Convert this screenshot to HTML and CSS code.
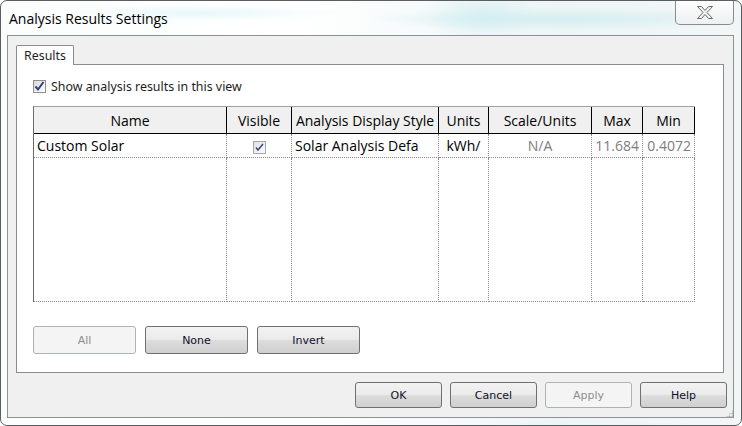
FILE: index.html
```html
<!DOCTYPE html>
<html lang="en">
  <head>
    <meta charset="UTF-8" />
    <title>Analysis Results Settings</title>
    <link rel="stylesheet" href="styles.css">
  </head>
  <body>
    <div class="window">
      <div class="titlebar">
        <span class="title">Analysis Results Settings</span>
        <button class="close-btn" title="Close">
          <svg width="18" height="13" viewBox="0 0 18 13">
            <path d="M1.5 0.5h4l3.5 4 3.5-4h4l-5.5 6 5.5 6h-4l-3.5-4-3.5 4h-4l5.5-6z" fill="#f2f2f2" stroke="#6b6b6b" stroke-width="1" stroke-linejoin="round"/>
          </svg>
        </button>
      </div>

      <div class="client">
        <div class="tabs">
          <div class="tab active">Results</div>
        </div>

        <div class="panel">
          <label class="check-row">
            <span class="checkbox">
              <svg width="11" height="11" viewBox="0 0 11 11">
                <path d="M1.5 5.5l2.5 3 5.5-7.5" fill="none" stroke="#2c3f86" stroke-width="2"/>
              </svg>
            </span>
            Show analysis results in this view
          </label>

          <div class="grid">
            <table>
              <colgroup>
                <col style="width: 193px">
                <col style="width: 65px">
                <col style="width: 147px">
                <col style="width: 50px">
                <col style="width: 103px">
                <col style="width: 51px">
                <col style="width: 52px">
              </colgroup>
              <thead>
                <tr>
                  <th>Name</th>
                  <th>Visible</th>
                  <th>Analysis Display Style</th>
                  <th>Units</th>
                  <th>Scale/Units</th>
                  <th>Max</th>
                  <th>Min</th>
                </tr>
              </thead>
              <tbody>
                <tr class="data-row">
                  <td>Custom Solar</td>
                  <td class="center">
                    <span class="checkbox small">
                      <svg width="9" height="9" viewBox="0 0 9 9">
                        <path d="M1 4.5l2 2.5 5-6" fill="none" stroke="#3a4c8a" stroke-width="1.6"/>
                      </svg>
                    </span>
                  </td>
                  <td>Solar Analysis Defa</td>
                  <td class="center">kWh/</td>
                  <td class="center muted">N/A</td>
                  <td class="num muted">11.684</td>
                  <td class="num muted">0.4072</td>
                </tr>
                <tr class="filler">
                  <td></td><td></td><td></td><td></td><td></td><td></td><td></td>
                </tr>
              </tbody>
            </table>
          </div>

          <div class="sel-buttons">
            <button class="btn wide" disabled>All</button>
            <button class="btn wide">None</button>
            <button class="btn wide">Invert</button>
          </div>
        </div>

        <div class="dialog-buttons">
          <button class="btn">OK</button>
          <button class="btn">Cancel</button>
          <button class="btn" disabled>Apply</button>
          <button class="btn">Help</button>
        </div>
        <span class="grip"></span>
      </div>
    </div>
  </body>
</html>
```

FILE: styles.css
```css
body {
  margin: 0;
  background-color: #ffffff;
  font-family: "Noto Sans", "Open Sans", sans-serif;
  font-size: 12.4px;
  color: #1e1e1e;
}

.window {
  width: 742px;
  height: 426px;
  box-sizing: border-box;
  border: 1px solid #5c5d60;
  border-radius: 7px;
  display: flex;
  flex-direction: column;
  overflow: hidden;
  background:
    radial-gradient(ellipse 140px 8px at 200px 12px, rgba(215, 242, 247, 0.6), transparent),
    radial-gradient(ellipse 200px 12px at 560px 18px, rgba(205, 236, 240, 0.8), transparent),
    radial-gradient(ellipse 60px 30px at 480px 14px, rgba(195, 234, 241, 0.5), transparent),
    linear-gradient(90deg, #fbfdfd 0%, #ffffff 40%, #eef5f5 75%, #f2f6f7 100%);
}

.titlebar {
  height: 34px;
  flex-shrink: 0;
  display: flex;
  align-items: flex-start;
  padding-left: 8px;
}

.title {
  font-family: "Open Sans", "Noto Sans", sans-serif;
  font-size: 14px;
  line-height: 35px;
  color: #000000;
}

.close-btn {
  margin-left: auto;
  margin-right: 7px;
  width: 59px;
  height: 24px;
  padding: 0;
  border: 1px solid #8b8b8b;
  border-top: none;
  border-radius: 0 0 5px 5px;
  background: linear-gradient(#fdfdfd, #eef0f1);
  display: flex;
  align-items: center;
  justify-content: center;
}

.client {
  flex: 1;
  margin: 0 7px 7px 6px;
  border: 1px solid #8f9091;
  background-color: #f0f0f0;
  display: flex;
  flex-direction: column;
  padding: 9px 6px 0 8px;
  position: relative;
}

.tabs {
  display: flex;
}

.tab {
  height: 19px;
  padding: 0 7px;
  border: 1px solid #898c95;
  border-bottom: none;
  border-radius: 2px 2px 0 0;
  background-color: #ffffff;
  line-height: 19px;
  margin-bottom: -1px;
  position: relative;
  z-index: 1;
}

.panel {
  box-sizing: border-box;
  height: 309px;
  border: 1px solid #898c95;
  background-color: #ffffff;
  padding: 15px 0 0 16px;
  margin-right: 3px;
}

.check-row {
  display: flex;
  align-items: center;
  gap: 5px;
  height: 13px;
  line-height: 13px;
}

.checkbox {
  width: 11px;
  height: 11px;
  border: 1px solid #8e8f8f;
  background: linear-gradient(135deg, #d9d9d9, #ffffff);
  display: inline-flex;
  align-items: center;
  justify-content: center;
}

.checkbox.small {
  border-color: #a7a7a7;
  background: linear-gradient(135deg, #e2e2e2, #fafafa);
  vertical-align: middle;
}

.grid {
  margin-top: 13px;
  width: 661px;
  height: 195px;
  border-left: 1px solid #6a6a6a;
  border-top: 1px solid #a0a0a0;
  background-color: #ffffff;
}

table {
  width: 661px;
  height: 195px;
  table-layout: fixed;
  border-collapse: separate;
  border-spacing: 0;
  font-family: "Open Sans", "Noto Sans", sans-serif;
  font-size: 14px;
}

th {
  height: 26px;
  padding: 0;
  font-weight: normal;
  background-color: #f0f0f0;
  border-right: 1px solid #000000;
  border-bottom: 1px solid #000000;
  white-space: nowrap;
  overflow: hidden;
  color: #000000;
}

td {
  padding: 0 3px;
  border-right: 1px dotted #8a8a8a;
  border-bottom: 1px dotted #8a8a8a;
  white-space: nowrap;
  overflow: hidden;
  color: #000000;
}

.data-row td {
  height: 23px;
}

.center {
  text-align: center;
}

.num {
  text-align: right;
}

.muted {
  color: #7d7d7d;
}

.sel-buttons {
  display: flex;
  gap: 9px;
  margin-top: 24px;
}

.btn {
  width: 87px;
  height: 26px;
  border: 1px solid #707070;
  border-radius: 3px;
  background: linear-gradient(#f2f2f2 0%, #ebebeb 50%, #dddddd 51%, #cfcfcf 100%);
  font-family: "DejaVu Sans", sans-serif;
  font-size: 11px;
  color: #10102a;
  padding: 0;
}

.btn.wide {
  width: 103px;
  height: 28px;
}

.btn:disabled {
  border-color: #adb2b5;
  background: #f4f4f4;
  color: #8d8d8d;
}

.dialog-buttons {
  display: flex;
  justify-content: flex-end;
  gap: 8px;
  margin-top: 9px;
}

.grip {
  position: absolute;
  right: -1px;
  bottom: -1px;
  width: 9px;
  height: 9px;
  background-image: radial-gradient(circle, #a9a9a9 0.8px, transparent 1.2px);
  background-size: 3px 3px;
  clip-path: polygon(100% 0, 100% 100%, 0 100%);
}
```
